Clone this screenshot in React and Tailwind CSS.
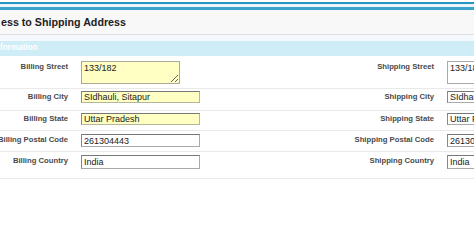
import React from "react";

const labelCls =
  "w-[68px] shrink-0 flex justify-end whitespace-nowrap text-[7.7px] font-bold text-[#4a4a4a] leading-[10px]";

function Field({ value, yellow, h }) {
  return (
    <input
      readOnly
      value={value}
      className={
        "w-[119px] shrink-0 box-border border border-[#a9a9a9] border-t-[#777] border-l-[#888] px-[2px] text-[9px] leading-[10px] text-[#222] outline-none " +
        (yellow ? "bg-[#ffffc3] border-[#b5b59a] border-t-[#6e6e60] border-l-[#7e7e70] " : "bg-white ") +
        h
      }
      style={{ fontFamily: '"Liberation Sans", Arial, sans-serif' }}
    />
  );
}

function Row({ l1, f1, l2, f2, cls, lpt }) {
  return (
    <div className={"flex items-start border-b border-[#e9e9e9] " + cls}>
      <div className={labelCls + " " + lpt}>{l1}</div>
      <div className="ml-[13px] w-[285px] shrink-0 flex">{f1}</div>
      <div className={labelCls + " " + lpt}>{l2}</div>
      <div className="ml-[13px] flex">{f2}</div>
    </div>
  );
}

export default function App() {
  return (
    <div
      className="w-[474px] h-[249px] overflow-hidden bg-white"
      style={{ fontFamily: '"Liberation Sans", Arial, sans-serif' }}
    >
      <div className="h-[2px] bg-white" />
      <div className="h-[2px] bg-[#2494c2]" />
      <div className="h-[3px] bg-[#eaf5f9]" />
      <div className="h-[3px] bg-[#3ba2cb]" />
      <div className="h-[25px] bg-[#f8f8f8] border-b border-[#e6dfdf] flex items-center pl-[1px] pt-[1px]">
        <span className="text-[10.7px] font-bold text-[#222] whitespace-nowrap">
          ess to Shipping Address
        </span>
      </div>
      <div className="h-[6px] bg-[#f3f9fc]" />
      <div className="h-[15px] bg-[#cfedf7] flex items-center">
        <span className="text-[8.2px] font-bold text-white whitespace-nowrap leading-none">
          formation
        </span>
      </div>
      <div className="flex flex-col">
        <Row
          cls="h-[33px] pt-[5px]"
          lpt="pt-[1px]"
          l1="Billing Street"
          l2="Shipping Street"
          f1={
            <textarea
              readOnly
              value="133/182"
              className="w-[99px] h-[23px] box-border border border-[#aaa99a] bg-[#ffffc3] px-[2px] pt-[1px] text-[9px] leading-[11px] text-[#222] outline-none"
              style={{ fontFamily: '"Liberation Sans", Arial, sans-serif' }}
            />
          }
          f2={
            <textarea
              readOnly
              value="133/182"
              className="w-[119px] h-[23px] box-border border border-[#a9a9a9] bg-white px-[2px] pt-[1px] text-[9px] leading-[11px] text-[#222] outline-none"
              style={{ fontFamily: '"Liberation Sans", Arial, sans-serif' }}
            />
          }
        />
        <Row
          cls="h-[22px] pt-[2px]"
          lpt="pt-[1px]"
          l1="Billing City"
          l2="Shipping City"
          f1={<Field value="SIdhauli, Sitapur" yellow h="h-[12px]" />}
          f2={<Field value="SIdhauli, Sitapur" h="h-[12px]" />}
        />
        <Row
          cls="h-[20px] pt-[2px]"
          lpt="pt-[1px]"
          l1="Billing State"
          l2="Shipping State"
          f1={<Field value="Uttar Pradesh" yellow h="h-[12px]" />}
          f2={<Field value="Uttar Pradesh" h="h-[12px]" />}
        />
        <Row
          cls="h-[21px] pt-[3px]"
          lpt="pt-[1px]"
          l1="Billing Postal Code"
          l2="Shipping Postal Code"
          f1={<Field value="261304443" h="h-[13px]" />}
          f2={<Field value="261304443" h="h-[13px]" />}
        />
        <Row
          cls="h-[27px] pt-[3px]"
          lpt="pt-[1px]"
          l1="Billing Country"
          l2="Shipping Country"
          f1={<Field value="India" h="h-[14px]" />}
          f2={<Field value="India" h="h-[14px]" />}
        />
      </div>
    </div>
  );
}
